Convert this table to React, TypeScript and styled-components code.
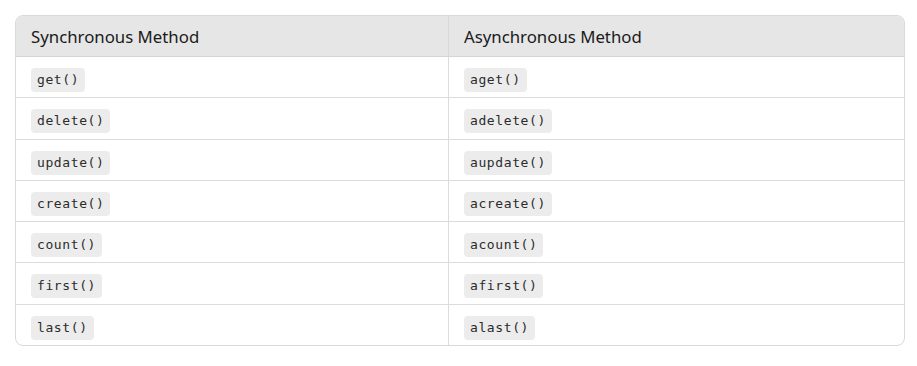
import React from 'react';
import styled, { createGlobalStyle } from 'styled-components';

const GlobalStyle = createGlobalStyle`
  body {
    margin: 0;
    background: #fff;
    font-family: 'Noto Sans', 'Open Sans', sans-serif;
    color: #0d0d0d;
  }
`;

const Page = styled.div`
  padding: 0 12px 0 15px;
  overflow: hidden;
`;

const Lead = styled.p`
  margin: -22px 0 13px;
  font-size: 16px;
  line-height: 24px;
  white-space: nowrap;
`;

const TableWrap = styled.div`
  width: 888px;
  border: 1px solid #d9d9d9;
  border-radius: 8px;
  overflow: hidden;
`;

const Table = styled.table`
  width: 100%;
  border-collapse: collapse;
  table-layout: fixed;
`;

const HeadCell = styled.th<{ $first?: boolean }>`
  width: ${(p) => (p.$first ? '402px' : 'auto')};
  height: 40px;
  padding: 0 15px;
  background: #e6e6e6;
  border-bottom: 1px solid #d4d4d4;
  border-left: ${(p) => (p.$first ? 'none' : '1px solid #d9d9d9')};
  text-align: left;
  font-weight: 400;
  font-size: 16.8px;
  color: #1a1a1a;
`;

const Row = styled.tr`
  & + & td {
    border-top: 1px solid #dcdcdc;
  }
`;

const Cell = styled.td<{ $first?: boolean }>`
  height: 30.3px;
  padding: 10px 15px 0;
  border-left: ${(p) => (p.$first ? 'none' : '1px solid #dcdcdc')};
  vertical-align: top;
`;

const Code = styled.code`
  display: inline-block;
  padding: 3px 6px;
  background: #ececec;
  border-radius: 4px;
  font-family: 'DejaVu Sans Mono', 'Liberation Mono', monospace;
  font-size: 13px;
  letter-spacing: 0.6px;
  line-height: 18px;
  color: #2b2b2b;
`;

const methods = ['get', 'delete', 'update', 'create', 'count', 'first', 'last'];

export default function App() {
  return (
    <Page>
      <GlobalStyle />
      <Lead>
        Here's a quick comparison of the synchronous query methods and their asynchronous equivalents in Django:
      </Lead>
      <TableWrap>
        <Table>
          <thead>
            <tr>
              <HeadCell $first>Synchronous Method</HeadCell>
              <HeadCell>Asynchronous Method</HeadCell>
            </tr>
          </thead>
          <tbody>
            {methods.map((m) => (
              <Row key={m}>
                <Cell $first>
                  <Code>{m}()</Code>
                </Cell>
                <Cell>
                  <Code>a{m}()</Code>
                </Cell>
              </Row>
            ))}
          </tbody>
        </Table>
      </TableWrap>
    </Page>
  );
}
